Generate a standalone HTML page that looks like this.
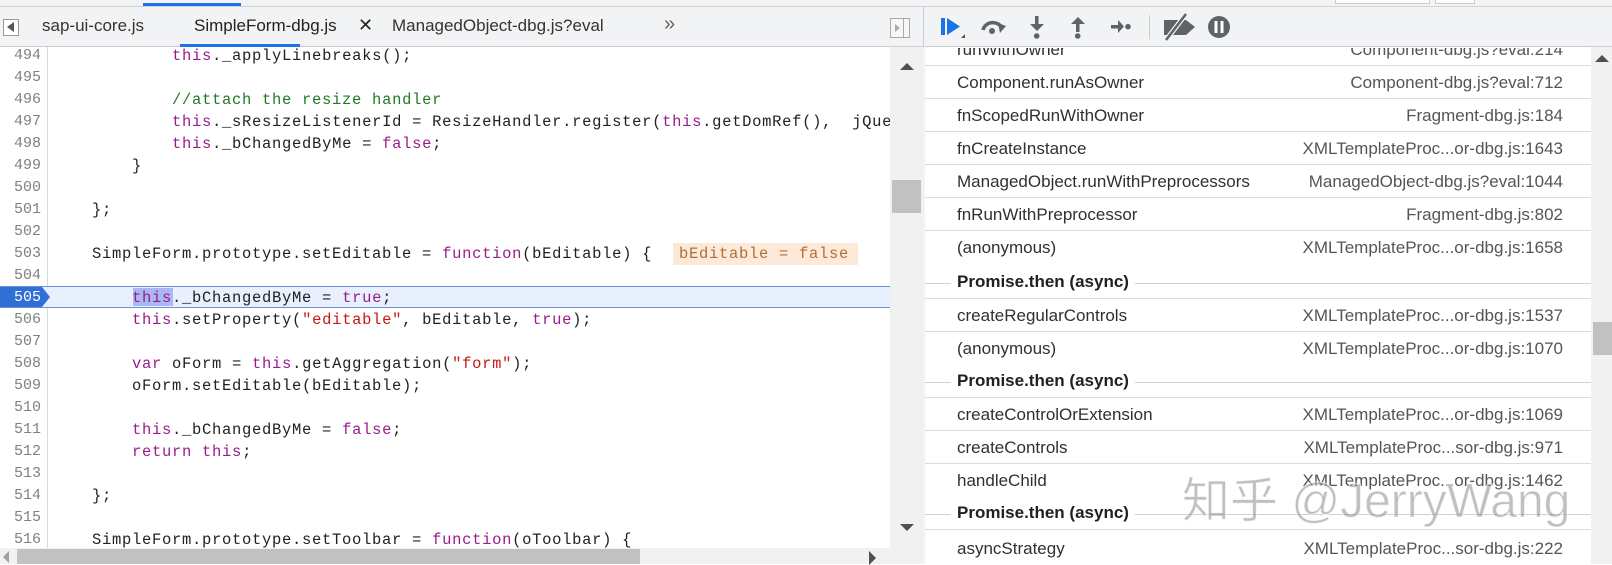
<!DOCTYPE html>
<html><head><meta charset="utf-8"><style>
*{margin:0;padding:0;box-sizing:border-box}
body{width:1612px;height:564px;overflow:hidden;background:#fff;font-family:"Liberation Sans","Noto Sans CJK SC",sans-serif;position:relative;color:#222}
.abs{position:absolute}
.topstrip{left:0;top:0;width:1612px;height:7px;background:#f1f3f4;border-bottom:1px solid #d0d0d0}
.tabbar{left:0;top:7px;width:923px;height:40px;background:#f1f3f4;border-bottom:1px solid #cbcdd1}
.tab{position:absolute;top:9px;font-size:17px;color:#333;white-space:nowrap}
.code{font-family:"Liberation Mono",monospace;font-size:15.5px;letter-spacing:0.7px;white-space:pre;color:#222}
.ln{position:absolute;left:0;width:41px;text-align:right;font-family:"Liberation Mono",monospace;font-size:15px;color:#808080;letter-spacing:0}
.kw{color:#9b1c8d}.cm{color:#237a25}.st{color:#c41a16}
.row{position:absolute;left:925px;width:666px;height:33px;border-bottom:1px solid #dadce0;font-size:17px;color:#303030}
.row .f{position:absolute;left:32px;top:7px}
.row .l{position:absolute;right:28px;top:7px;color:#555}
.async{position:absolute;left:925px;width:666px;height:33px;border-bottom:1px solid #dadce0}
.async:before{content:"";position:absolute;left:0;right:0;top:17px;border-top:1px solid #d0d0d0}
.async span{position:absolute;left:26px;top:6px;background:#fff;padding:0 6px;font-weight:bold;font-size:17px;color:#202020}
</style></head><body>
<div class="abs topstrip"></div>
<div class="abs" style="left:143px;top:3px;width:98px;height:3px;background:#1a73e8"></div>
<div class="abs" style="left:1335px;top:0;width:95px;height:4px;background:#fff;border:1px solid #ccc;border-top:0"></div>
<div class="abs" style="left:1435px;top:0;width:40px;height:4px;background:#fff;border:1px solid #ccc;border-top:0"></div>

<div class="abs tabbar">
  <div class="abs" style="left:3px;top:12px;width:16px;height:17px;border:1px solid #999;background:#fff"></div>
  <div class="abs" style="left:7px;top:15px;width:0;height:0;border-top:5px solid transparent;border-bottom:5px solid transparent;border-right:7px solid #555"></div>
  <div class="tab" style="left:42px">sap-ui-core.js</div>
  <div class="tab" style="left:194px;color:#222">SimpleForm-dbg.js</div>
  <div class="tab" style="left:358px;color:#222;font-size:18px;top:8px">✕</div>
  <div class="abs" style="left:180px;top:37px;width:120px;height:3px;background:#1a73e8"></div>
  <div class="tab" style="left:392px">ManagedObject-dbg.js?eval</div>
  <div class="tab" style="left:664px;color:#666;font-size:20px;top:6px">»</div>
  <div class="abs" style="left:890px;top:11px;width:20px;height:20px;border:1px solid #aaa;background:#f7f7f7"></div>
  <div class="abs" style="left:903px;top:11px;width:1px;height:20px;background:#aaa"></div>
  <div class="abs" style="left:895px;top:17px;width:0;height:0;border-top:4px solid transparent;border-bottom:4px solid transparent;border-left:5px solid #aaa"></div>
</div>

<!-- code -->
<div class="abs" style="left:47px;top:47px;width:1px;height:501px;background:#dadada"></div>
<div class="abs" style="left:0;top:286px;width:890px;height:22px;background:#e8effd;border-top:1px solid #6b8fd9;border-bottom:1px solid #6b8fd9"></div>
<svg class="abs" style="left:0;top:287px" width="52" height="20"><path d="M0 0H42L50 10L42 20H0Z" fill="#2f6fd6"/></svg>
<div class="abs" style="left:133px;top:288px;width:40px;height:18px;background:#a9b8f3"></div>
<div class="abs" style="left:673px;top:243px;width:185px;height:22px;background:#fde9d8"></div>

<div class="abs code" style="left:0;top:45px;width:890px;height:503px;overflow:hidden;line-height:22px">
<div class="ln" style="top:0">494</div><div class="abs" style="left:52px;top:0">            <span class="kw">this</span>._applyLinebreaks();</div>
<div class="ln" style="top:22px">495</div>
<div class="ln" style="top:44px">496</div><div class="abs" style="left:52px;top:44px">            <span class="cm">//attach the resize handler</span></div>
<div class="ln" style="top:66px">497</div><div class="abs" style="left:52px;top:66px">            <span class="kw">this</span>._sResizeListenerId = ResizeHandler.register(<span class="kw">this</span>.getDomRef(),  jQuery</div>
<div class="ln" style="top:88px">498</div><div class="abs" style="left:52px;top:88px">            <span class="kw">this</span>._bChangedByMe = <span class="kw">false</span>;</div>
<div class="ln" style="top:110px">499</div><div class="abs" style="left:52px;top:110px">        }</div>
<div class="ln" style="top:132px">500</div>
<div class="ln" style="top:154px">501</div><div class="abs" style="left:52px;top:154px">    };</div>
<div class="ln" style="top:176px">502</div>
<div class="ln" style="top:198px">503</div><div class="abs" style="left:52px;top:198px">    SimpleForm.prototype.setEditable = <span class="kw">function</span>(bEditable) {  </div><div class="abs" style="left:679px;top:198px;color:#b0703a">bEditable = false</div>
<div class="ln" style="top:220px">504</div>
<div class="ln" style="top:242px;color:#fff">505</div><div class="abs" style="left:52px;top:242px">        <span class="kw">this</span>._bChangedByMe = <span class="kw">true</span>;</div>
<div class="ln" style="top:264px">506</div><div class="abs" style="left:52px;top:264px">        <span class="kw">this</span>.setProperty(<span class="st">"editable"</span>, bEditable, <span class="kw">true</span>);</div>
<div class="ln" style="top:286px">507</div>
<div class="ln" style="top:308px">508</div><div class="abs" style="left:52px;top:308px">        <span class="kw">var</span> oForm = <span class="kw">this</span>.getAggregation(<span class="st">"form"</span>);</div>
<div class="ln" style="top:330px">509</div><div class="abs" style="left:52px;top:330px">        oForm.setEditable(bEditable);</div>
<div class="ln" style="top:352px">510</div>
<div class="ln" style="top:374px">511</div><div class="abs" style="left:52px;top:374px">        <span class="kw">this</span>._bChangedByMe = <span class="kw">false</span>;</div>
<div class="ln" style="top:396px">512</div><div class="abs" style="left:52px;top:396px">        <span class="kw">return</span> <span class="kw">this</span>;</div>
<div class="ln" style="top:418px">513</div>
<div class="ln" style="top:440px">514</div><div class="abs" style="left:52px;top:440px">    };</div>
<div class="ln" style="top:462px">515</div>
<div class="ln" style="top:484px">516</div><div class="abs" style="left:52px;top:484px">    SimpleForm.prototype.setToolbar = <span class="kw">function</span>(oToolbar) {</div>
</div>

<!-- code scrollbars -->
<div class="abs" style="left:890px;top:47px;width:33px;height:517px;background:#f1f1f1"></div>
<div class="abs" style="left:892px;top:180px;width:29px;height:33px;background:#c1c1c1"></div>
<div class="abs" style="left:900px;top:63px;border-left:7px solid transparent;border-right:7px solid transparent;border-bottom:7px solid #505050"></div>
<div class="abs" style="left:900px;top:524px;border-left:7px solid transparent;border-right:7px solid transparent;border-top:7px solid #505050"></div>
<div class="abs" style="left:0;top:548px;width:890px;height:16px;background:#f1f1f1"></div>
<div class="abs" style="left:17px;top:549px;width:623px;height:15px;background:#c1c1c1"></div>
<div class="abs" style="left:3px;top:551px;border-top:6px solid transparent;border-bottom:6px solid transparent;border-right:6px solid #a0a0a0"></div>
<div class="abs" style="left:869px;top:551px;border-top:7px solid transparent;border-bottom:7px solid transparent;border-left:7px solid #505050"></div>

<!-- right pane -->
<div class="abs" style="left:923px;top:7px;width:689px;height:40px;background:#f1f3f4;border-bottom:1px solid #cbcdd1;border-left:1px solid #cbcdd1"></div>
<svg class="abs" style="left:930px;top:10px" width="320" height="34">
 <rect x="11" y="8" width="4" height="17" fill="#1a73e8"/>
 <path d="M17 8L30 16.5L17 25Z" fill="#1a73e8"/>
 <path d="M31 28L35 24V28Z" fill="#555"/>
 <path d="M53 20a10 9 0 0 1 19 -2" stroke="#5f6368" stroke-width="3.5" fill="none"/>
 <path d="M68 13L76 16L70 23Z" fill="#5f6368"/>
 <circle cx="62" cy="21" r="3" fill="#5f6368"/>
 <rect x="105" y="6" width="3.5" height="10" fill="#5f6368"/><path d="M100 14H114L107 21Z" fill="#5f6368"/><circle cx="106.7" cy="26" r="2.8" fill="#5f6368"/>
 <rect x="146" y="12" width="3.5" height="10" fill="#5f6368"/><path d="M141 14H155L148 7Z" fill="#5f6368"/><circle cx="147.7" cy="26" r="2.8" fill="#5f6368"/>
 <rect x="181" y="15" width="9" height="3.5" fill="#5f6368"/><path d="M188 10V23L194 16.5Z" fill="#5f6368"/><circle cx="198" cy="16.7" r="2.8" fill="#5f6368"/>
 <rect x="219" y="5" width="1" height="24" fill="#ccc"/>
 <path d="M234 10H256L265 17L256 25H234Z" fill="#5f6368"/><path d="M236 30L256 4" stroke="#f1f3f4" stroke-width="5"/><path d="M236 30L256 4" stroke="#5f6368" stroke-width="2.5"/>
 <circle cx="289" cy="17" r="11" fill="#5f6368"/><rect x="284.5" y="11" width="3" height="12" fill="#fff"/><rect x="290.5" y="11" width="3" height="12" fill="#fff"/>
</svg>

<div class="abs" style="left:923px;top:47px;width:2px;height:517px;background:#f1f3f4"></div>
<div class="abs" style="left:925px;top:48px;width:666px;height:516px;overflow:hidden">
 <div style="position:relative;left:-925px;top:-46px;width:1612px;height:564px">
  <div class="row" style="top:31px"><span class="f">runWithOwner</span><span class="l">Component-dbg.js?eval:214</span></div>
  <div class="row" style="top:64px"><span class="f">Component.runAsOwner</span><span class="l">Component-dbg.js?eval:712</span></div>
  <div class="row" style="top:97px"><span class="f">fnScopedRunWithOwner</span><span class="l">Fragment-dbg.js:184</span></div>
  <div class="row" style="top:130px"><span class="f">fnCreateInstance</span><span class="l">XMLTemplateProc...or-dbg.js:1643</span></div>
  <div class="row" style="top:163px"><span class="f">ManagedObject.runWithPreprocessors</span><span class="l">ManagedObject-dbg.js?eval:1044</span></div>
  <div class="row" style="top:196px"><span class="f">fnRunWithPreprocessor</span><span class="l">Fragment-dbg.js:802</span></div>
  <div class="row" style="top:229px;border-bottom:0"><span class="f">(anonymous)</span><span class="l">XMLTemplateProc...or-dbg.js:1658</span></div>
  <div class="async" style="top:264px"><span>Promise.then (async)</span></div>
  <div class="row" style="top:297px"><span class="f">createRegularControls</span><span class="l">XMLTemplateProc...or-dbg.js:1537</span></div>
  <div class="row" style="top:330px;border-bottom:0"><span class="f">(anonymous)</span><span class="l">XMLTemplateProc...or-dbg.js:1070</span></div>
  <div class="async" style="top:363px"><span>Promise.then (async)</span></div>
  <div class="row" style="top:396px"><span class="f">createControlOrExtension</span><span class="l">XMLTemplateProc...or-dbg.js:1069</span></div>
  <div class="row" style="top:429px"><span class="f">createControls</span><span class="l">XMLTemplateProc...sor-dbg.js:971</span></div>
  <div class="row" style="top:462px;border-bottom:0"><span class="f">handleChild</span><span class="l">XMLTemplateProc...or-dbg.js:1462</span></div>
  <div class="async" style="top:495px"><span>Promise.then (async)</span></div>
  <div class="row" style="top:530px"><span class="f">asyncStrategy</span><span class="l">XMLTemplateProc...sor-dbg.js:222</span></div>
 </div>
</div>
<div class="abs" style="left:1591px;top:47px;width:21px;height:517px;background:#f1f1f1"></div>
<div class="abs" style="left:1593px;top:322px;width:19px;height:33px;background:#c1c1c1"></div>
<div class="abs" style="left:1595px;top:55px;border-left:7px solid transparent;border-right:7px solid transparent;border-bottom:7px solid #505050"></div>

<div class="abs" style="left:1182px;top:461px;font-size:48px;color:rgba(140,140,140,0.55);white-space:nowrap;font-family:'Liberation Sans','Noto Sans CJK SC',sans-serif;-webkit-text-stroke:1px rgba(255,255,255,0.7)">知乎 @JerryWang</div>
</body></html>
